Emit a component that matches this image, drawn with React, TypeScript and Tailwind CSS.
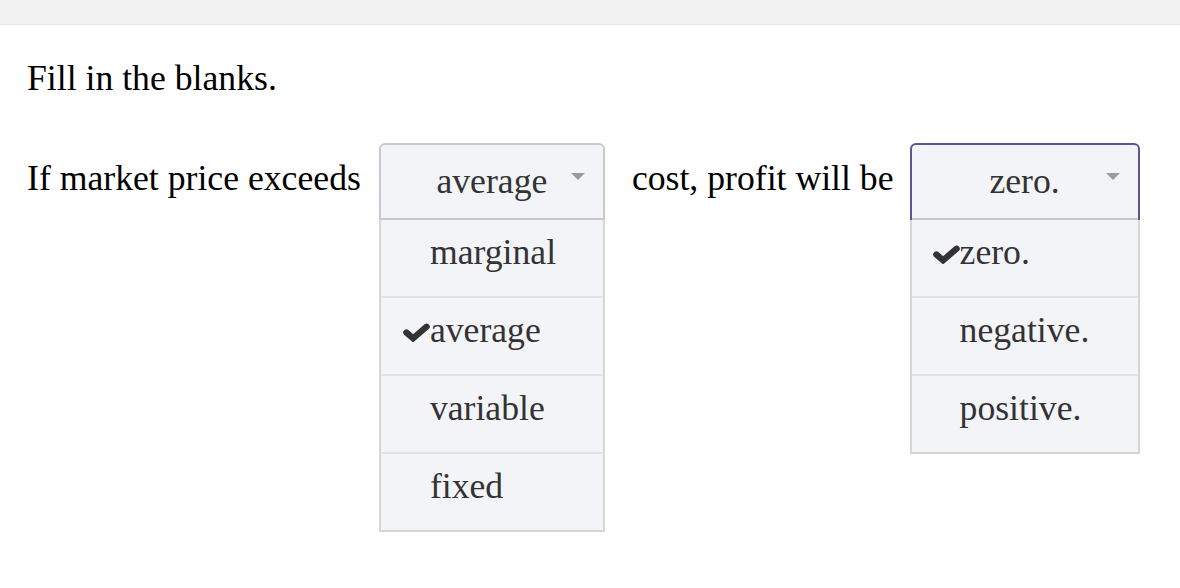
import React from 'react';

type DropProps = {
  width: string;
  value: string;
  options: string[];
  focused?: boolean;
  padLeft: string;
};

function Check() {
  return (
    <svg width="28" height="19" viewBox="0 0 28 19">
      <polyline
        points="3.5,9.5 10.5,15.5 24.5,3.5"
        fill="none"
        stroke="#333"
        strokeWidth="6.5"
        strokeLinejoin="miter"
        strokeLinecap="round"
      />
    </svg>
  );
}

function Dropdown({ width, value, options, focused, padLeft }: DropProps) {
  return (
    <div className={`relative shrink-0 ${width}`}>
      <div
        className={
          'relative h-[77px] rounded-t-[6px] border-2 border-b-0 bg-[#f3f4f8] text-center text-[#333] ' +
          (focused ? 'border-[#5b5594]' : 'border-[#c9c9cb]')
        }
      >
        <div className="pt-[16px] text-[35.7px] leading-[40px]">{value}</div>
        <span className="absolute right-[18px] top-[28px] h-0 w-0 border-x-[7px] border-t-[7px] border-x-transparent border-t-[#9b9b9b]" />
        <div className="absolute bottom-0 left-0 right-0 h-[2px] bg-[#c8c8ca]" />
      </div>
      <ul className="absolute left-0 right-0 top-[77px] border-x-2 border-b-2 border-[#d6d6d8] bg-[#f3f4f8] text-[#333]">
        {options.map((o, i) => (
          <li
            key={o}
            className={
              'flex items-start pt-[12px] text-[35.7px] leading-[40px] ' +
              padLeft +
              (i === 0 ? ' h-[76px]' : ' h-[78px] border-t-2 border-[#e1e2e6]')
            }
          >
            <span className="flex h-[32px] w-[27px] shrink-0 items-end">{o === value && <Check />}</span>
            <span>{o}</span>
          </li>
        ))}
      </ul>
    </div>
  );
}

export default function App() {
  return (
    <div className="min-h-screen bg-white font-['Liberation_Serif',_'Times_New_Roman',_serif] text-black">
      <div className="h-[25px] border-b border-[#e6e6e6] bg-[#f2f2f2]" />
      <div className="px-[27px]">
        <p className="pt-[33px] text-[35.7px] leading-[40px]">Fill in the blanks.</p>
        <div className="mt-[45px] flex items-start">
          <span className="mr-[18px] pt-[15px] text-[35.7px] leading-[40px] whitespace-nowrap">If market price exceeds</span>
          <Dropdown width="w-[226px]" value="average" options={['marginal', 'average', 'variable', 'fixed']} padLeft="pl-[22px]" />
          <span className="ml-[27px] mr-[16px] pt-[15px] text-[35.7px] leading-[40px] whitespace-nowrap">cost, profit will be</span>
          <Dropdown width="w-[230px]" value="zero." options={['zero.', 'negative.', 'positive.']} focused padLeft="pl-[21px]" />
        </div>
      </div>
    </div>
  );
}
